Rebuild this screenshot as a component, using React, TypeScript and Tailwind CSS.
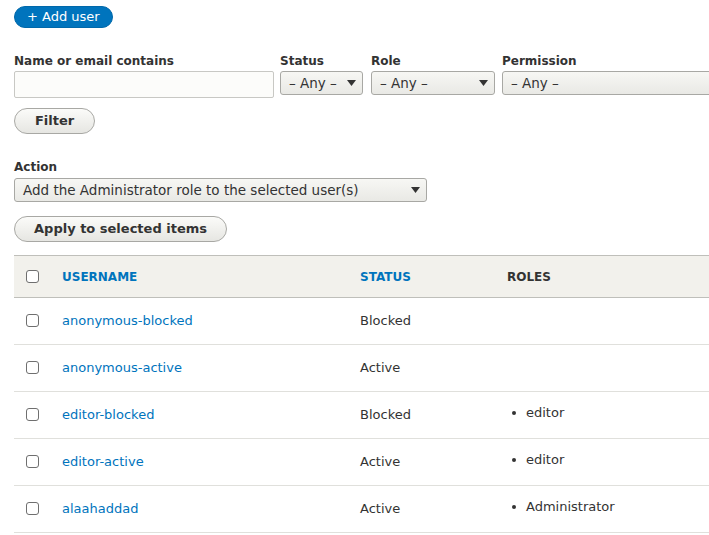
import React from "react";

const font = { fontFamily: '"DejaVu Sans", "Liberation Sans", sans-serif' };

function Arrow() {
  return (
    <svg width="9" height="6" viewBox="0 0 9 6" className="shrink-0">
      <path d="M0 0 L9 0 L4.5 6 Z" fill="#333" />
    </svg>
  );
}

function Select({ text, w, arrow = true }: { text: string; w: string; arrow?: boolean }) {
  return (
    <div
      className={`${w} h-[24px] flex items-center justify-between pl-[8px] pr-[6px] border border-[#a8a8a4] rounded-[3px] bg-gradient-to-b from-[#f7f7f4] to-[#e9e9e5] text-[13.5px] text-[#333] whitespace-nowrap`}
    >
      <span>{text}</span>
      {arrow && <Arrow />}
    </div>
  );
}

function Checkbox() {
  return <div className="w-[13px] h-[13px] rounded-[3px] border border-[#6f6f6f] bg-white" />;
}

const rows = [
  { name: "anonymous-blocked", status: "Blocked", role: "" },
  { name: "anonymous-active", status: "Active", role: "" },
  { name: "editor-blocked", status: "Blocked", role: "editor" },
  { name: "editor-active", status: "Active", role: "editor" },
  { name: "alaahaddad", status: "Active", role: "Administrator" },
];

export default function App() {
  return (
    <div className="w-[709px] h-[535px] overflow-hidden bg-white text-[#333]" style={font}>
      <div className="pl-[14px] pt-[4px]">
        <div className="inline-flex items-center h-[22px] px-[12px] rounded-full bg-[#0074bd] border border-[#0068aa] text-white text-[13px]">
          + Add user
        </div>

        <div className="flex mt-[25px] gap-[6px]">
          <div className="flex flex-col">
            <div className="text-[12px] font-bold h-[16px] leading-[16px]">Name or email contains</div>
            <div className="mt-[2px] w-[260px] h-[27px] border border-[#c8c8c4] rounded-[2px] bg-[#fcfcfa]" />
          </div>
          <div className="flex flex-col">
            <div className="text-[12px] font-bold h-[16px] leading-[16px]">Status</div>
            <div className="mt-[2px]">
              <Select text="– Any –" w="w-[83px]" />
            </div>
          </div>
          <div className="flex flex-col ml-[2px]">
            <div className="text-[12px] font-bold h-[16px] leading-[16px]">Role</div>
            <div className="mt-[2px]">
              <Select text="– Any –" w="w-[124px]" />
            </div>
          </div>
          <div className="flex flex-col ml-[1px]">
            <div className="text-[12px] font-bold h-[16px] leading-[16px]">Permission</div>
            <div className="mt-[2px]">
              <Select text="– Any –" w="w-[240px]" arrow={false} />
            </div>
          </div>
        </div>

        <div className="mt-[10px] inline-flex items-center justify-center w-[81px] h-[26px] rounded-full border border-[#a8a8a4] bg-gradient-to-b from-[#fbfbf9] to-[#e6e6e2] text-[13px] font-bold text-[#333]">
          Filter
        </div>

        <div className="mt-[25px] text-[12px] font-bold h-[16px] leading-[16px]">Action</div>
        <div className="mt-[3px]">
          <Select text="Add the Administrator role to the selected user(s)" w="w-[413px]" />
        </div>

        <div className="mt-[14px] inline-flex items-center justify-center w-[213px] h-[26px] rounded-full border border-[#a8a8a4] bg-gradient-to-b from-[#fbfbf9] to-[#e6e6e2] text-[13px] font-bold text-[#333]">
          Apply to selected items
        </div>

        <div className="mt-[13px] w-[720px]">
          <div className="flex items-center h-[43px] bg-[#f2f1ec] border-t border-b border-[#bfbfba] text-[12px] font-bold">
            <div className="w-[48px] pl-[12px] flex items-center"><Checkbox /></div>
            <div className="w-[298px] text-[#0074bd]">USERNAME</div>
            <div className="w-[147px] text-[#0074bd]">STATUS</div>
            <div className="text-[#333]">ROLES</div>
          </div>
          {rows.map((r) => (
            <div key={r.name} className="flex items-center h-[47px] border-b border-[#e0e0dc] text-[13px]">
              <div className="w-[48px] pl-[12px] flex items-center -mt-[2px]"><Checkbox /></div>
              <div className="w-[298px] text-[#0074bd]">{r.name}</div>
              <div className="w-[147px] text-[#333]">{r.status}</div>
              <div className="text-[#333]">
                {r.role && (
                  <div className="flex items-center -mt-[4px]">
                    <span className="w-[4px] h-[4px] rounded-full bg-[#333] ml-[5px] mr-[10px]" />
                    <span>{r.role}</span>
                  </div>
                )}
              </div>
            </div>
          ))}
        </div>
      </div>
    </div>
  );
}
